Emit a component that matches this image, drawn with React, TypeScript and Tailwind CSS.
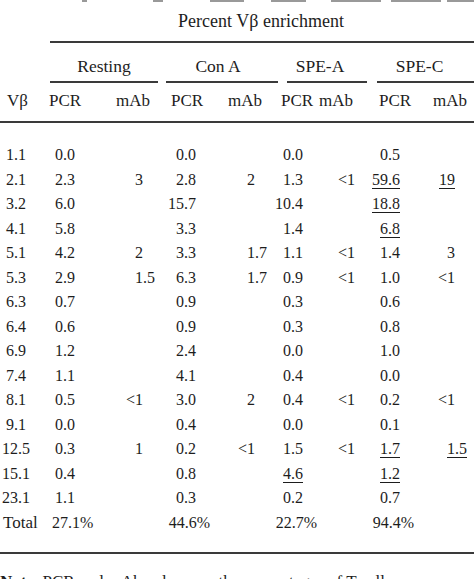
import React from "react";

type Cell = string;

// "_" prefix = underlined value in the source table
const rows: Cell[][] = [
  ["1.1", "0.0", "", "0.0", "", "0.0", "", "0.5", ""],
  ["2.1", "2.3", "3", "2.8", "2", "1.3", "<1", "_59.6", "_19"],
  ["3.2", "6.0", "", "15.7", "", "10.4", "", "_18.8", ""],
  ["4.1", "5.8", "", "3.3", "", "1.4", "", "_6.8", ""],
  ["5.1", "4.2", "2", "3.3", "1.7", "1.1", "<1", "1.4", "3"],
  ["5.3", "2.9", "1.5", "6.3", "1.7", "0.9", "<1", "1.0", "<1"],
  ["6.3", "0.7", "", "0.9", "", "0.3", "", "0.6", ""],
  ["6.4", "0.6", "", "0.9", "", "0.3", "", "0.8", ""],
  ["6.9", "1.2", "", "2.4", "", "0.0", "", "1.0", ""],
  ["7.4", "1.1", "", "4.1", "", "0.4", "", "0.0", ""],
  ["8.1", "0.5", "<1", "3.0", "2", "0.4", "<1", "0.2", "<1"],
  ["9.1", "0.0", "", "0.4", "", "0.0", "", "0.1", ""],
  ["12.5", "0.3", "1", "0.2", "<1", "1.5", "<1", "_1.7", "_1.5"],
  ["15.1", "0.4", "", "0.8", "", "_4.6", "", "_1.2", ""],
  ["23.1", "1.1", "", "0.3", "", "0.2", "", "0.7", ""],
];

const cellPad = [
  "text-center pr-[16px]",
  "text-left pl-[7px]",
  "text-right pr-[5px]",
  "text-right pr-[14px]",
  "text-right pr-[3px]",
  "text-right pr-[15px]",
  "text-right pr-[10px]",
  "text-right pr-[15px]",
  "text-right pr-[7px]",
];

// mAb columns line up on the decimal point
const decimalCols = [2, 4, 8];

function Value({ v, col }: { v: string; col: number }) {
  if (!v) return null;
  const under = v.startsWith("_");
  const text = under ? v.slice(1) : v;
  const needsPad = decimalCols.includes(col) && !text.includes(".");
  return (
    <>
      <span className={under ? "underline decoration-1 underline-offset-[3px]" : ""}>
        {text}
      </span>
      {needsPad && <span className="invisible">.0</span>}
    </>
  );
}

function Rule({ className = "" }: { className?: string }) {
  return <div className={`h-[2px] bg-[#3a3a3a] ${className}`} />;
}

const grid = "grid grid-cols-[48px_52px_60px_50px_60px_48px_47px_50px_59px]";

export default function App() {
  return (
    <div className="w-[474px] h-[579px] overflow-hidden bg-white text-[#1d1d1d] font-['Liberation_Serif',serif]">
      {/* broken top rule, cut by the crop */}
      <div className="flex h-[2px]">
        <div className="ml-[82px] w-[5px] bg-[#999]" />
        <div className="ml-[66px] w-[10px] bg-[#999]" />
        <div className="ml-[47px] w-[34px] bg-[#999]" />
        <div className="ml-[27px] w-[35px] bg-[#999]" />
        <div className="ml-[25px] w-[50px] bg-[#999]" />
        <div className="ml-[10px] w-[50px] bg-[#999]" />
        <div className="ml-[6px] flex-1 bg-[#999]" />
      </div>

      <div className="h-[39px] pl-[48px] text-center text-[18px] leading-[39px]">
        Percent Vβ enrichment
      </div>
      <Rule className="ml-[50px]" />

      <div className={`${grid} h-[38px] pt-[8px] text-[17.5px] leading-[30px]`}>
        <div />
        <div className="col-span-2 text-center">Resting</div>
        <div className="col-span-2 text-center pl-[6px]">Con A</div>
        <div className="col-span-2 text-center pl-[5px]">SPE-A</div>
        <div className="col-span-2 text-center">SPE-C</div>
      </div>
      <div className="flex">
        <Rule className="ml-[50px] w-[108px]" />
        <Rule className="ml-[8px] w-[112px]" />
        <Rule className="ml-[9px] w-[80px]" />
        <Rule className="ml-[10px] flex-1" />
      </div>

      <div className={`${grid} h-[38px] text-[17px] leading-[36px] whitespace-nowrap`}>
        <div className="pl-[7px]">Vβ</div>
        <div className="text-center pr-[18px]">PCR</div>
        <div className="text-center pl-[6px]">mAb</div>
        <div className="text-center pl-[4px]">PCR</div>
        <div className="text-center pl-[10px]">mAb</div>
        <div className="text-center pl-[6px]">PCR</div>
        <div className="text-center pr-[11px]">mAb</div>
        <div className="text-center pl-[10px]">PCR</div>
        <div className="text-center pl-[11px]">mAb</div>
      </div>
      <Rule />

      <div className="pt-[20px] text-[16px] leading-[24.5px] whitespace-nowrap">
        {rows.map((r) => (
          <div key={r[0]} className={`${grid} h-[24.5px]`}>
            {r.map((v, i) => (
              <div key={i} className={cellPad[i]}>
                <Value v={v} col={i} />
              </div>
            ))}
          </div>
        ))}
        <div className={`${grid} h-[24.5px]`}>
          <div className="pl-[3px] text-[17px]">Total</div>
          <div className="text-left pl-[4px]">27.1%</div>
          <div />
          <div className="text-right">44.6%</div>
          <div />
          <div className="text-right pr-[1px]">22.7%</div>
          <div />
          <div className="text-right pr-[1px]">94.4%</div>
          <div />
        </div>
      </div>

      <Rule className="mt-[17px]" />

      <div className="mt-[18px] text-[17px] leading-[20px] whitespace-nowrap">
        <span className="font-bold">Note.</span> PCR and mAb values are the percentages of T cells
      </div>
    </div>
  );
}
